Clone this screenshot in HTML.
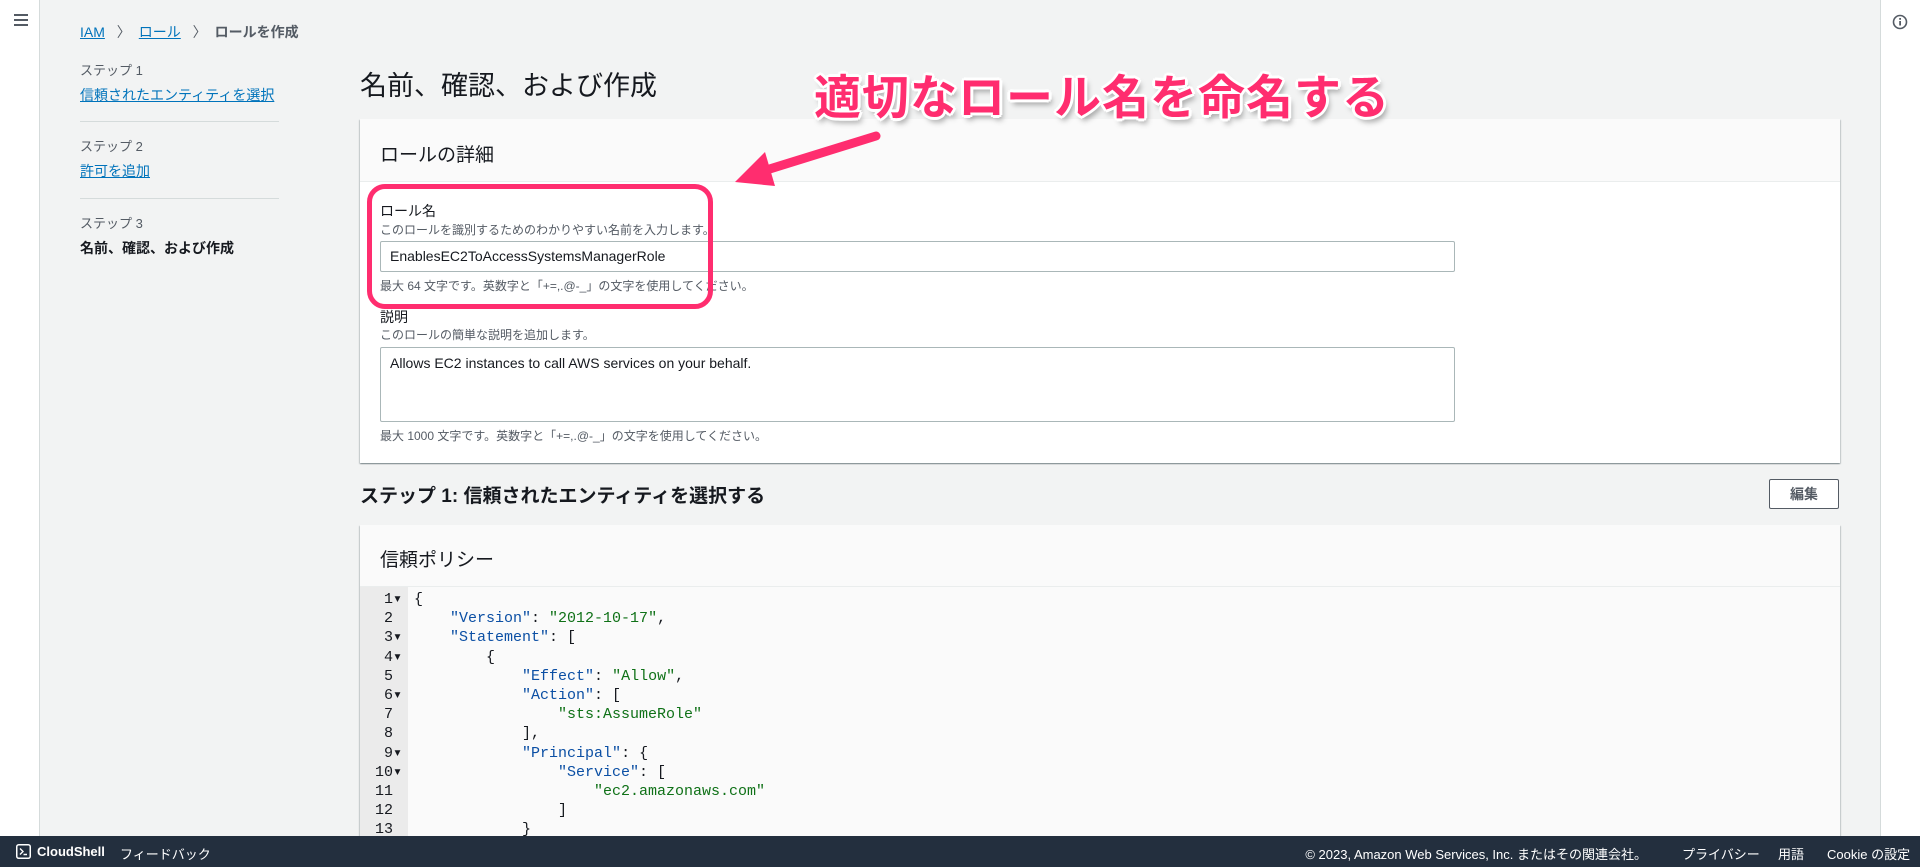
<!DOCTYPE html>
<html><head><meta charset="utf-8">
<style>
*{box-sizing:border-box;margin:0;padding:0}
body{width:1920px;height:867px;overflow:hidden;background:#f2f3f3;font-family:"Liberation Sans","Noto Sans CJK JP",sans-serif;color:#16191f;position:relative}
.abs{position:absolute}
.lb{left:0;top:0;width:40px;height:836px;background:#fff;border-right:1px solid #d5dbdb}
.rb{right:0;top:0;width:40px;height:836px;background:#fff;border-left:1px solid #d5dbdb}
a{color:#0073bb;text-decoration:underline}
.small{font-size:13px;color:#545b64}
.card{background:#fff;box-shadow:0 1px 1px rgba(0,28,36,.3),1px 1px 1px rgba(0,28,36,.15),-1px 1px 1px rgba(0,28,36,.15)}
.chead{background:#fafafa;border-bottom:1px solid #eaeded;font-size:19px}
.inp{border:1px solid #aab7b8;border-radius:2px;background:#fff;font-size:14px;padding:0 9px}
.mono{font-family:"Liberation Mono",monospace;font-size:15px}
.k{color:#0b4fa4}.s{color:#0f7117}
.foot{left:0;top:836px;width:1920px;height:31px;background:#232f3e;color:#fff;font-size:13px}
.ann{font-size:47px;font-weight:bold;color:#ff2d6f;text-shadow:3px 0 #fff,-3px 0 #fff,0 3px #fff,0 -3px #fff,2px 2px #fff,-2px -2px #fff,2px -2px #fff,-2px 2px #fff,3px 5px 6px rgba(0,0,0,.35);letter-spacing:1px}
</style></head><body>
<div class="abs lb"></div>
<div class="abs rb"></div>
<div class="abs" style="left:14px;top:14px;width:14px">
<div style="height:2px;background:#545b64;margin-bottom:3px"></div><div style="height:2px;background:#545b64;margin-bottom:3px"></div><div style="height:2px;background:#545b64"></div></div>
<svg class="abs" style="left:1892px;top:14px" width="16" height="16" viewBox="0 0 16 16"><circle cx="8" cy="8" r="6.5" fill="none" stroke="#545b64" stroke-width="1.6"/><rect x="7.2" y="7" width="1.8" height="4.5" fill="#545b64"/><rect x="7.2" y="4" width="1.8" height="1.8" fill="#545b64"/></svg>

<div class="abs" style="left:80px;top:22px;font-size:14px"><a>IAM</a> <span style="color:#545b64;margin:0 8px">〉</span><a>ロール</a> <span style="color:#545b64;margin:0 8px">〉</span><b style="color:#545b64">ロールを作成</b></div>

<div class="abs" style="left:80px;top:60px;width:199px;font-size:14px">
<div class="small" style="font-size:13px">ステップ 1</div>
<div style="margin-top:6px"><a>信頼されたエンティティを選択</a></div>
<div style="border-top:1px solid #d5dbdb;margin-top:16px;padding-top:14px" class="small">ステップ 2</div>
<div style="margin-top:6px"><a>許可を追加</a></div>
<div style="border-top:1px solid #d5dbdb;margin-top:17px;padding-top:14px" class="small">ステップ 3</div>
<div style="margin-top:6px;font-weight:bold">名前、確認、および作成</div>
</div>

<div class="abs" style="left:360px;top:64px;font-size:27px">名前、確認、および作成</div>

<div class="abs card" style="left:360px;top:119px;width:1480px;height:344px">
<div class="chead" style="height:63px;padding:21px 0 0 20px">ロールの詳細</div>
<div class="abs" style="left:20px;top:82px;font-size:14px">ロール名</div>
<div class="abs small" style="left:20px;top:102px;font-size:12px">このロールを識別するためのわかりやすい名前を入力します。</div>
<div class="abs inp" style="left:20px;top:122px;width:1075px;height:31px;line-height:29px">EnablesEC2ToAccessSystemsManagerRole</div>
<div class="abs small" style="left:20px;top:158px;font-size:12px">最大 64 文字です。英数字と「+=,.@-_」の文字を使用してください。</div>
<div class="abs" style="left:20px;top:188px;font-size:14px">説明</div>
<div class="abs small" style="left:20px;top:207px;font-size:12px">このロールの簡単な説明を追加します。</div>
<div class="abs inp" style="left:20px;top:228px;width:1075px;height:75px;padding-top:7px">Allows EC2 instances to call AWS services on your behalf.</div>
<div class="abs small" style="left:20px;top:308px;font-size:12px">最大 1000 文字です。英数字と「+=,.@-_」の文字を使用してください。</div>
</div>

<div class="abs" style="left:360px;top:481px;font-size:19px;font-weight:bold">ステップ 1: 信頼されたエンティティを選択する</div>
<div class="abs" style="left:1769px;top:479px;width:70px;height:30px;border:1px solid #545b64;border-radius:2px;background:#fff;font-size:14px;font-weight:bold;color:#545b64;text-align:center;line-height:28px">編集</div>

<div class="abs card" style="left:360px;top:525px;width:1480px;height:320px;background:#fafafa">
<div class="chead" style="height:62px;padding:20px 0 0 20px">信頼ポリシー</div>
<div class="abs mono" style="left:0;top:62px;width:48px;height:260px;background:#ebebeb;color:#16191f;text-align:right;padding:3px 6px 0 0;line-height:19.2px">1▾<br>2&nbsp;<br>3▾<br>4▾<br>5&nbsp;<br>6▾<br>7&nbsp;<br>8&nbsp;<br>9▾<br>10▾<br>11&nbsp;<br>12&nbsp;<br>13&nbsp;</div>
<pre class="abs mono" style="left:54px;top:65px;line-height:19.2px">{
    <span class="k">"Version"</span>: <span class="s">"2012-10-17"</span>,
    <span class="k">"Statement"</span>: [
        {
            <span class="k">"Effect"</span>: <span class="s">"Allow"</span>,
            <span class="k">"Action"</span>: [
                <span class="s">"sts:AssumeRole"</span>
            ],
            <span class="k">"Principal"</span>: {
                <span class="k">"Service"</span>: [
                    <span class="s">"ec2.amazonaws.com"</span>
                ]
            }</pre>
</div>

<div class="abs foot">
<svg class="abs" style="left:16px;top:8px" width="15" height="15" viewBox="0 0 15 15"><rect x=".75" y=".75" width="13.5" height="13.5" rx="2" fill="none" stroke="#fff" stroke-width="1.5"/><path d="M4 4.5l3 3-3 3M7.5 10.5h3.5" fill="none" stroke="#fff" stroke-width="1.4"/></svg>
<span class="abs" style="left:37px;top:8px;font-weight:bold">CloudShell</span>
<span class="abs" style="left:120px;top:8px">フィードバック</span>
<span class="abs" style="right:273px;top:8px">© 2023, Amazon Web Services, Inc. またはその関連会社。</span>
<span class="abs" style="left:1682px;top:8px">プライバシー</span>
<span class="abs" style="left:1778px;top:8px">用語</span>
<span class="abs" style="left:1827px;top:8px">Cookie の設定</span>
</div>

<div class="abs" style="left:367px;top:184px;width:346px;height:125px;border:5px solid #ff2d6f;border-radius:18px"></div>
<svg class="abs" style="left:720px;top:120px" width="170" height="80" viewBox="0 0 170 80"><path d="M156 16 L40 52" stroke="#ff2d6f" stroke-width="9" stroke-linecap="round" fill="none"/><path d="M15 62 L45 32 L55 66 Z" fill="#ff2d6f"/></svg>
<div class="abs ann" style="left:814px;top:59px">適切なロール名を命名する</div>
</body></html>
